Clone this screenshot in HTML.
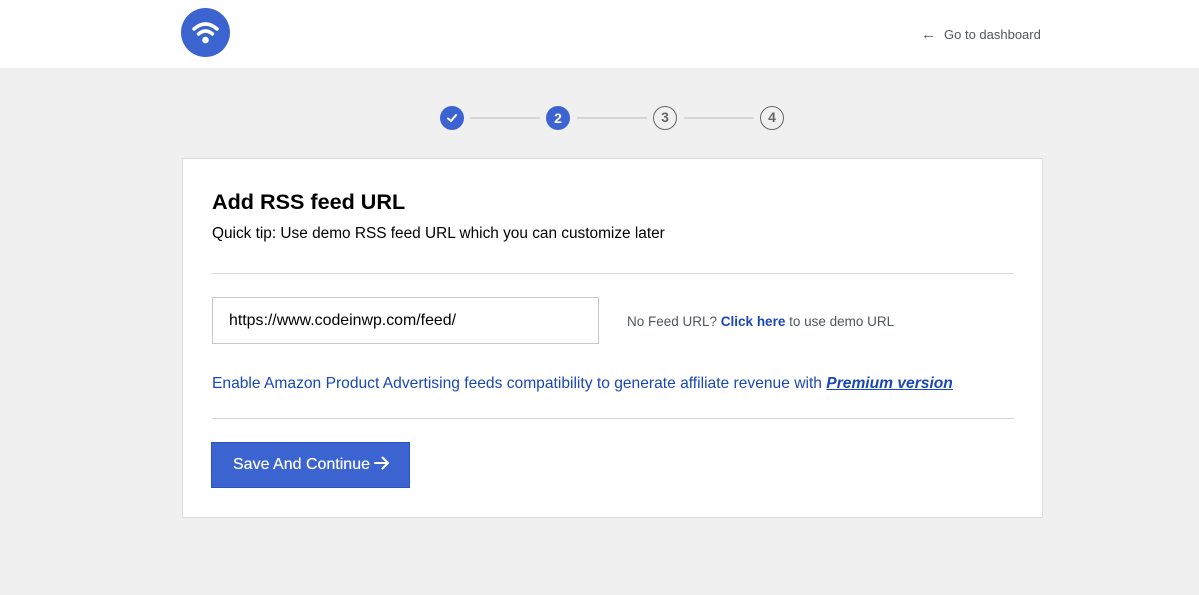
<!DOCTYPE html>
<html><head><meta charset="utf-8"><style>
*{margin:0;padding:0;box-sizing:border-box}
body{width:1199px;height:595px;background:#f0f0f0;font-family:"Liberation Sans",Arial,sans-serif;position:relative;overflow:hidden}
.top{position:absolute;left:0;top:0;width:1199px;height:68px;background:#fff}
.logo{position:absolute;left:181px;top:8px;width:49px;height:49px;border-radius:50%;background:#3c64d1}
.dash{position:absolute;left:921px;top:26px;font-size:13px;color:#50575e}
.step{position:absolute;top:106px;width:24px;height:24px;border-radius:50%;font-size:14px;text-align:center;line-height:24px;font-weight:bold}
.on{background:#3c64d1;color:#fff}
.off{border:1.5px solid #666;color:#666;line-height:21px;background:#f0f0f0}
.line{position:absolute;top:117px;height:2px;background:#d6d6d6}
.card{position:absolute;left:182px;top:158px;width:861px;height:360px;background:#fff;border:1px solid #dcdcdc}
h1{position:absolute;left:29px;top:30px;font-size:21.6px;font-weight:bold;color:#000}
.tip{position:absolute;left:29px;top:66px;font-size:15.4px;color:#000}
.hr{position:absolute;left:29px;width:802px;height:1px;background:#d6d6d6}
.inp{position:absolute;left:29px;top:138px;width:387px;height:47px;border:1px solid #c8c8c8;font-size:15.9px;color:#000;padding:14px 0 0 16px}
.nf{position:absolute;left:444px;top:155px;font-size:13.5px;color:#50575e}
.nf b{color:#1a47b8}
.amz{position:absolute;left:29px;top:216px;font-size:15.6px;color:#1a47b8}
.amz a{font-weight:bold;font-style:italic;text-decoration:underline;color:#1a47b8}
.btn{position:absolute;left:28px;top:283px;width:199px;height:46px;background:#3c64d1;border:1px solid #2d52b8;color:#fff;font-size:16px;padding:13px 0 0 21px;text-shadow:0 0 0.4px #fff}
</style></head><body>
<div class="top">
<div class="logo"><svg width="49" height="49" viewBox="0 0 49 49"><g fill="none" stroke="#fff" stroke-width="3.5" stroke-linecap="round"><path d="M13 21 Q24.5 11 36 21"/><path d="M17.5 26 Q24.5 20 31.5 26"/></g><circle cx="24.5" cy="32" r="3.3" fill="#fff"/></svg></div>
<div class="dash"><span style="font-size:15px;margin-right:8px">&#8592;</span>Go to dashboard</div>
</div>
<div class="step on" style="left:440px"><svg width="12" height="12" viewBox="0 0 12 12" style="margin-top:6px"><path d="M2 6.5 L5 9 L10 3" fill="none" stroke="#fff" stroke-width="2" stroke-linecap="round" stroke-linejoin="round"/></svg></div>
<div class="line" style="left:470px;width:70px"></div>
<div class="step on" style="left:546px">2</div>
<div class="line" style="left:577px;width:70px"></div>
<div class="step off" style="left:653px">3</div>
<div class="line" style="left:684px;width:70px"></div>
<div class="step off" style="left:760px">4</div>
<div class="card">
<h1>Add RSS feed URL</h1>
<div class="tip">Quick tip: Use demo RSS feed URL which you can customize later</div>
<div class="hr" style="top:114px"></div>
<div class="inp">https://www.codeinwp.com/feed/</div>
<div class="nf">No Feed URL? <b>Click here</b> to use demo URL</div>
<div class="amz">Enable Amazon Product Advertising feeds compatibility to generate affiliate revenue with <a>Premium version</a></div>
<div class="hr" style="top:259px"></div>
<div class="btn">Save And Continue <svg width="16" height="14" viewBox="0 0 16 14" style="vertical-align:-1px"><path d="M1 7H14M8.5 1.5L14 7L8.5 12.5" fill="none" stroke="#fff" stroke-width="2" stroke-linecap="round" stroke-linejoin="round"/></svg></div>
</div>
</body></html>
